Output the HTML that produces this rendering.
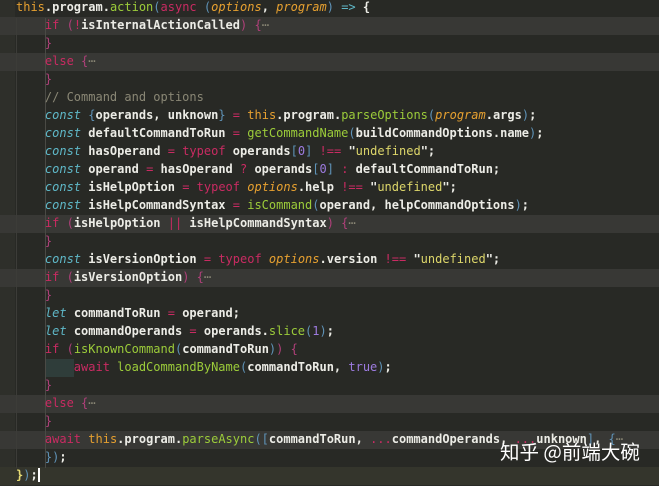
<!DOCTYPE html>
<html><head><meta charset="utf-8"><style>
html,body{margin:0;padding:0;width:659px;height:486px;overflow:hidden;background:#282925;}
.l{position:absolute;left:0;width:659px;height:18px;top:0;}
.t{position:absolute;left:16px;top:0;margin-top:1px;height:18px;line-height:18px;font:bold 12px "DejaVu Sans Mono","Liberation Mono",monospace;color:#ecece6;white-space:pre;}
.hl{background:#383835;}
.cur{background:#34352c;}
.g{position:absolute;left:0;top:0;width:15px;height:486px;background:#2e2f2a;}
.ig{position:absolute;left:45px;top:18px;width:1px;height:450px;background:#4a4a45;}
.ig2{position:absolute;left:16px;top:18px;width:1px;height:450px;background:#3c3c38;}
.k{color:#c92b62;font-weight:normal;}.f{color:#9ccc3a;font-weight:normal;}.p{color:#e6a030;font-style:italic;font-weight:normal;}.s{color:#ddd66a;font-weight:normal;}
.c{color:#8a8775;font-weight:normal;}.d{color:#5fb8c8;font-style:italic;font-weight:normal;}.n{color:#9d7be0;font-weight:normal;}
.th{color:#e6a030;font-weight:normal;}.b{color:#5f93b8;font-weight:normal;}.br{color:#b0407a;font-weight:normal;}.y{color:#e6db74;}
.wm{position:absolute;left:500px;top:439px;font:19.5px "Noto Sans CJK SC",sans-serif;color:#fff;line-height:24px;}
</style></head><body>
<div class="g"></div>
<div class="l hl" style="top:17px"></div>
<div class="l hl" style="top:53px"></div>
<div class="l hl" style="top:215px"></div>
<div class="l hl" style="top:269px"></div>
<div class="l hl" style="top:395px"></div>
<div class="l hl" style="top:431px"></div>
<div class="l cur" style="top:467px"></div>
<div style="position:absolute;left:46px;top:359px;width:28px;height:18px;background:#2f3d3a"></div>
<div class="ig2"></div><div class="ig"></div>
<div class="t" style="top:-1px"><span class="th">this</span>.program.<span class="f">action</span><span class="b">(</span><span class="k">async</span> <span class="b">(</span><span class="p">options</span>, <span class="p">program</span><span class="b">)</span> <span class="d" style="font-style:normal">=&gt;</span> {</div>
<div class="t" style="top:17px">    <span class="k">if</span> <span class="br">(</span><span class="k">!</span>isInternalActionCalled<span class="br">)</span> <span class="br">{</span><span class="c">⋯</span></div>
<div class="t" style="top:35px">    <span class="br">}</span></div>
<div class="t" style="top:53px">    <span class="k">else</span> <span class="br">{</span><span class="c">⋯</span></div>
<div class="t" style="top:71px">    <span class="br">}</span></div>
<div class="t" style="top:89px">    <span class="c">// Command and options</span></div>
<div class="t" style="top:107px">    <span class="d">const</span> <span class="b">{</span>operands, unknown<span class="b">}</span> <span class="k">=</span> <span class="th">this</span>.program.<span class="f">parseOptions</span><span class="b">(</span><span class="p">program</span>.args<span class="b">)</span>;</div>
<div class="t" style="top:125px">    <span class="d">const</span> defaultCommandToRun <span class="k">=</span> <span class="f">getCommandName</span><span class="b">(</span>buildCommandOptions.name<span class="b">)</span>;</div>
<div class="t" style="top:143px">    <span class="d">const</span> hasOperand <span class="k">=</span> <span class="k">typeof</span> operands<span class="b">[</span><span class="n">0</span><span class="b">]</span> <span class="k">!==</span> "<span class="s">undefined</span>";</div>
<div class="t" style="top:161px">    <span class="d">const</span> operand <span class="k">=</span> hasOperand <span class="k">?</span> operands<span class="b">[</span><span class="n">0</span><span class="b">]</span> <span class="k">:</span> defaultCommandToRun;</div>
<div class="t" style="top:179px">    <span class="d">const</span> isHelpOption <span class="k">=</span> <span class="k">typeof</span> <span class="p">options</span>.help <span class="k">!==</span> "<span class="s">undefined</span>";</div>
<div class="t" style="top:197px">    <span class="d">const</span> isHelpCommandSyntax <span class="k">=</span> <span class="f">isCommand</span><span class="b">(</span>operand, helpCommandOptions<span class="b">)</span>;</div>
<div class="t" style="top:215px">    <span class="k">if</span> <span class="br">(</span>isHelpOption <span class="k">||</span> isHelpCommandSyntax<span class="br">)</span> <span class="br">{</span><span class="c">⋯</span></div>
<div class="t" style="top:233px">    <span class="br">}</span></div>
<div class="t" style="top:251px">    <span class="d">const</span> isVersionOption <span class="k">=</span> <span class="k">typeof</span> <span class="p">options</span>.version <span class="k">!==</span> "<span class="s">undefined</span>";</div>
<div class="t" style="top:269px">    <span class="k">if</span> <span class="br">(</span>isVersionOption<span class="br">)</span> <span class="br">{</span><span class="c">⋯</span></div>
<div class="t" style="top:287px">    <span class="br">}</span></div>
<div class="t" style="top:305px">    <span class="d">let</span> commandToRun <span class="k">=</span> operand;</div>
<div class="t" style="top:323px">    <span class="d">let</span> commandOperands <span class="k">=</span> operands.<span class="f">slice</span><span class="b">(</span><span class="n">1</span><span class="b">)</span>;</div>
<div class="t" style="top:341px">    <span class="k">if</span> <span class="br">(</span><span class="f">isKnownCommand</span><span class="b">(</span>commandToRun<span class="b">)</span><span class="br">)</span> <span class="br">{</span></div>
<div class="t" style="top:359px">        <span class="k">await</span> <span class="f">loadCommandByName</span><span class="b">(</span>commandToRun, <span class="n">true</span><span class="b">)</span>;</div>
<div class="t" style="top:377px">    <span class="br">}</span></div>
<div class="t" style="top:395px">    <span class="k">else</span> <span class="br">{</span><span class="c">⋯</span></div>
<div class="t" style="top:413px">    <span class="br">}</span></div>
<div class="t" style="top:431px">    <span class="k">await</span> <span class="th">this</span>.program.<span class="f">parseAsync</span><span class="b">([</span>commandToRun, <span class="k">...</span>commandOperands, <span class="k">...</span>unknown<span class="b">]</span>, <span class="b">{</span><span class="c">⋯</span></div>
<div class="t" style="top:449px">    <span class="b">})</span>;</div>
<div class="t" style="top:467px"><span class="y">}</span><span class="b">)</span>;<span style="border-left:2px solid #fff;margin-left:0"></span></div>
<div class="wm">知乎 @前端大碗</div>
</body></html>
